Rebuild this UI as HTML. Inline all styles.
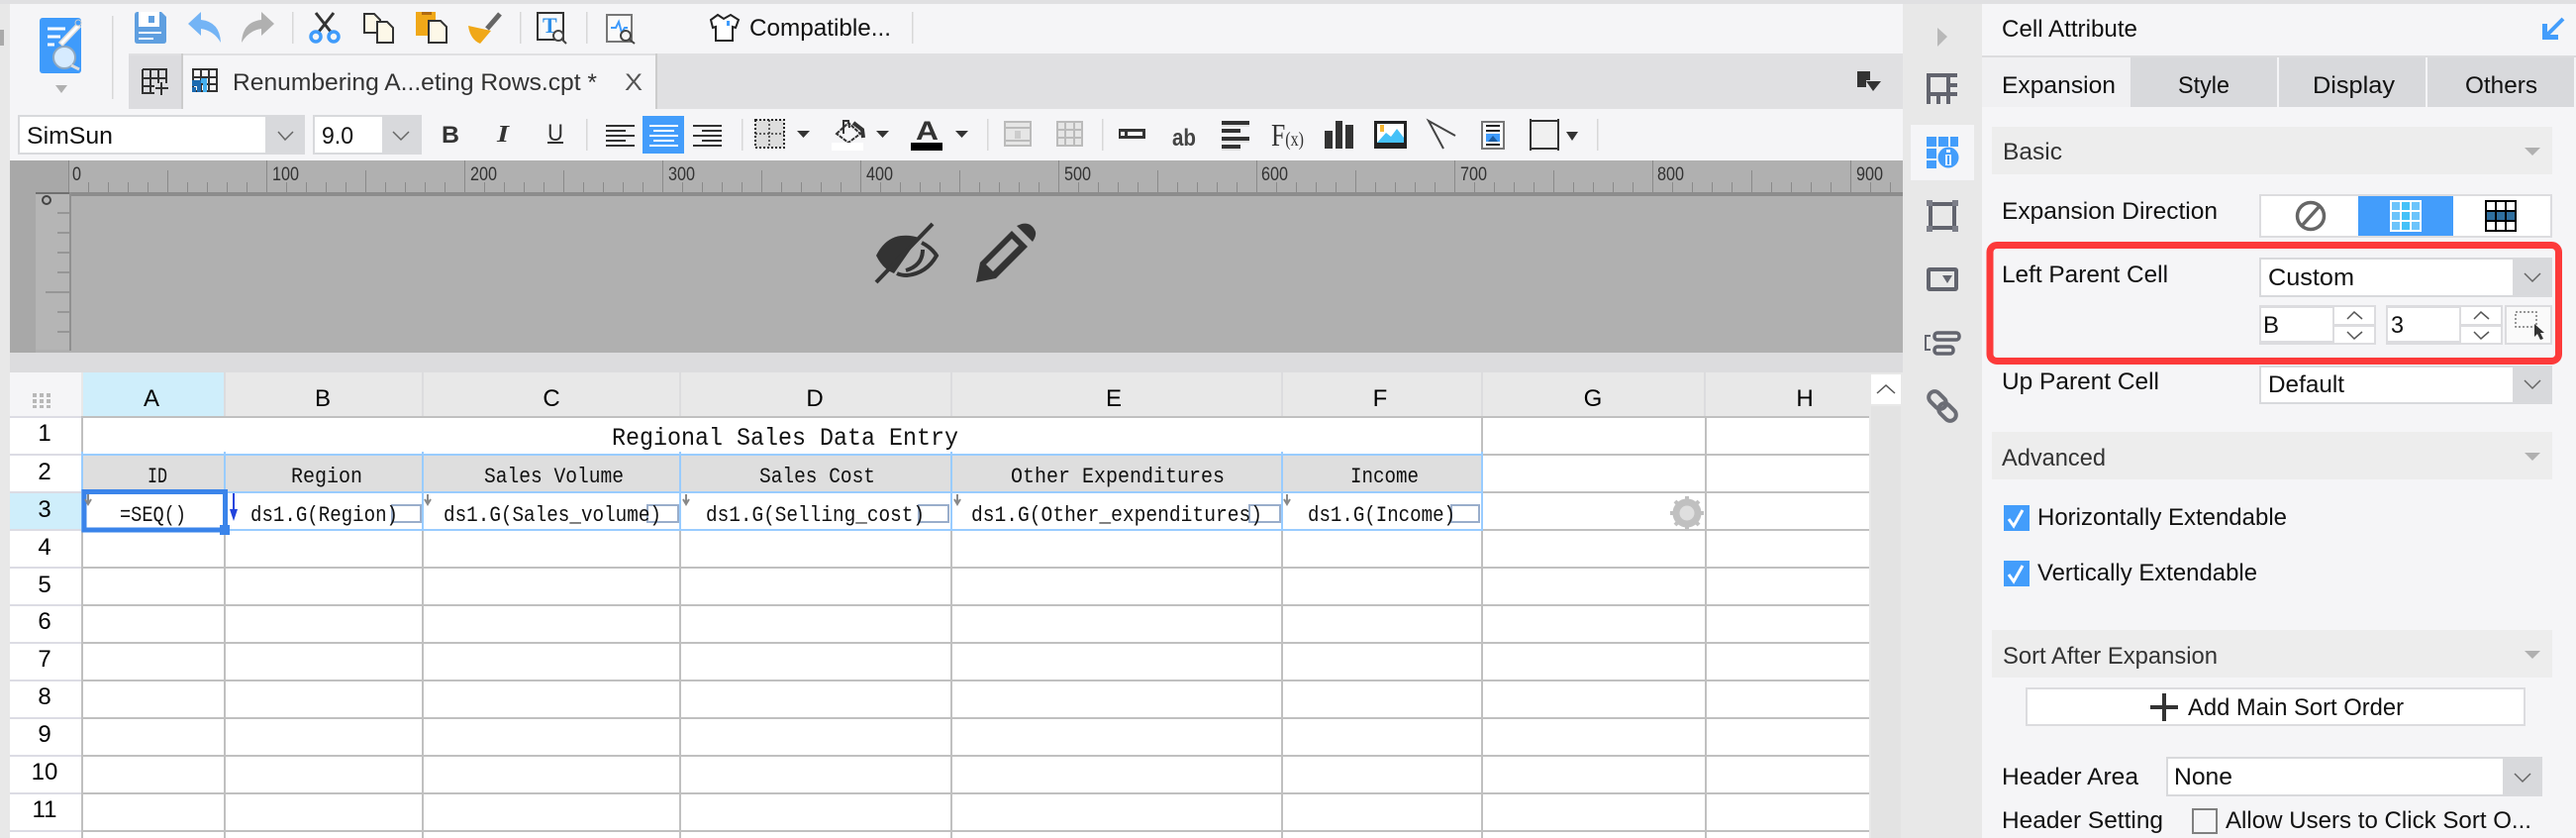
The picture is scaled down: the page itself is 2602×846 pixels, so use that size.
<!DOCTYPE html>
<html lang="en"><head><meta charset="utf-8"><title>Cell Attribute</title>
<style>
html,body{margin:0;padding:0;width:2602px;height:846px;overflow:hidden;background:#f5f5f7}
svg{display:block}
text{font-family:"Liberation Sans",sans-serif;font-size:24px;fill:#111}
.m{font-family:"Liberation Mono",monospace;font-size:22px;fill:#111}
.t{font-family:"Liberation Mono",monospace;font-size:25px;fill:#111}
.h{font-size:24px;fill:#000;text-anchor:middle}
.r{font-size:19px;fill:#333}
</style></head><body>
<svg width="2602" height="846" viewBox="0 0 2602 846" xmlns="http://www.w3.org/2000/svg">
<defs>
<pattern id="rt" patternUnits="userSpaceOnUse" x="69" y="162" width="200" height="34">
<path d="M.5 0V32M100.5 10V32M20.5 22V32M40.5 22V32M60.5 22V32M80.5 22V32M120.5 22V32M140.5 22V32M160.5 22V32M180.5 22V32" stroke="#8a8a8a" fill="none"/>
</pattern>
</defs>
<rect width="2602" height="846" fill="#f5f5f7"/>
<rect width="2602" height="4" fill="#e0e0e2"/>
<rect y="4" width="10" height="842" fill="#e8e8e8"/>
<rect y="30" width="4" height="16" fill="#aaa"/>

<!-- designer icon -->
<rect x="40" y="18" width="42" height="56" rx="3" fill="#3f9bfb"/>
<path d="M48 29H66M48 37H61M48 45H55" stroke="#fff" stroke-width="3"/>
<path d="M80 25L61 45" stroke="#ddd" stroke-width="6"/><path d="M79 26L62 44" stroke="#fff" stroke-width="3"/>
<circle cx="65" cy="58" r="11" fill="#d6ebff" stroke="#8fa8c0" stroke-width="2"/>
<path d="M72 66L80 70" stroke="#ddd" stroke-width="3"/>
<circle cx="79" cy="23" r="3" fill="#3f9bfb" stroke="#ccc"/>
<path d="M56 86H68L62 94Z" fill="#b0b0b0"/>
<rect x="113" y="16" width="1.500" height="84" fill="#d8d8d8"/>

<!-- top toolbar -->
<path d="M139 12H163L168 17V41Q168 44 165 44H139Q136 44 136 41V15Q136 12 139 12Z" fill="#5f9fe0"/>
<rect x="140" y="12" width="21" height="15" fill="#fff"/><rect x="150" y="16" width="6" height="7" fill="#5f9fe0"/>
<path d="M140 33H163M140 39H155" stroke="#fff" stroke-width="2"/>
<path d="M190 24L203 12V20Q222 22 223 43Q216 31 203 29V36Z" fill="#74b4f5"/>
<path d="M277 24L264 12V20Q245 22 244 43Q251 31 264 29V36Z" fill="#b0b0b0"/>
<rect x="295" y="12" width="1.500" height="32" fill="#d8d8d8"/>
<path d="M319 13L334 32M337 13L322 32" stroke="#333" stroke-width="3"/>
<circle cx="319" cy="37" r="5" fill="none" stroke="#3f9bfb" stroke-width="3.500"/><circle cx="337" cy="37" r="5" fill="none" stroke="#3f9bfb" stroke-width="3.500"/>
<path d="M368 14H378L384 20V33H368Z" fill="#fdf8e8" stroke="#333" stroke-width="2"/>
<path d="M381 22H391L397 28V43H381Z" fill="#fdf8e8" stroke="#333" stroke-width="2"/>
<rect x="420" y="12" width="20" height="24" fill="#f0a818"/><rect x="426" y="12" width="10" height="3" fill="#b06a10"/>
<path d="M433 21H445L451 27V43H433Z" fill="#fdf8e8" stroke="#333" stroke-width="2"/>
<path d="M473 26L496 31L485 44Q475 40 473 26Z" fill="#f0a818"/>
<path d="M505 14L492 29" stroke="#666" stroke-width="5"/>
<rect x="525" y="12" width="1.500" height="32" fill="#d8d8d8"/>
<rect x="543" y="13" width="26" height="27" fill="#fafafa" stroke="#333" stroke-width="2"/>
<text x="548" y="33" style="font-size:22px;fill:#2e8fe8;font-weight:bold;font-family:'Liberation Serif',serif">T</text>
<circle cx="564" cy="36" r="5" fill="#f5f5f7" stroke="#444" stroke-width="2"/><path d="M568 40L572 44" stroke="#444" stroke-width="2"/>
<rect x="592" y="12" width="1.500" height="32" fill="#d8d8d8"/>
<rect x="613" y="15" width="25" height="27" fill="#fafafa" stroke="#777" stroke-width="2"/>
<path d="M617 28H622L625 22L628 33L631 28H634" fill="none" stroke="#3f9bfb" stroke-width="2"/>
<circle cx="632" cy="36" r="5" fill="#f5f5f7" stroke="#444" stroke-width="2"/><path d="M636 40L641 44" stroke="#444" stroke-width="2"/>
<path d="M725 15L731 19L738 15L746 20L743 28L740 27V41H723V27L720 28L718 20Z" fill="#fff" stroke="#222" stroke-width="2"/>
<rect x="734" y="21" width="3" height="5" fill="#3f9bfb"/>
<text x="757" y="36" textLength="143" lengthAdjust="spacingAndGlyphs">Compatible...</text>
<rect x="921" y="12" width="1.500" height="32" fill="#d8d8d8"/>

<!-- tab row -->
<rect x="130" y="54" width="1792" height="56" fill="#e0e0e2"/>
<rect x="130" y="56" width="53" height="54" fill="#dcdcdf"/>
<rect x="183" y="54" width="2" height="56" fill="#ccc"/>
<rect x="185" y="56" width="477" height="54" fill="#f5f5f7"/>
<rect x="662" y="54" width="2" height="56" fill="#ccc"/>
<path d="M144 70H168V84M144 70V94H156M144 79H168M144 87H156M152 70V94M160 70V84" fill="none" stroke="#333" stroke-width="2"/>
<path d="M163 83V96M157 89H170" stroke="#333" stroke-width="2"/>
<path d="M195 70H219V92H195ZM195 78H219M195 85H219M203 70V92M211 70V92" fill="none" stroke="#333" stroke-width="2"/>
<path d="M194 81H203V93H199V87H194ZM194 88H198V93H194Z" fill="#1c6ab0"/><path d="M203 79H209V93H205V84H203Z" fill="#45b0f0"/>
<text x="235" y="91" textLength="368" lengthAdjust="spacingAndGlyphs" style="fill:#333">Renumbering A...eting Rows.cpt *</text>
<text x="631" y="91" textLength="18" lengthAdjust="spacingAndGlyphs" style="fill:#555">X</text>
<path d="M1876 72H1889V81H1885V88H1876ZM1885 82H1900L1892 92Z" fill="#333"/>

<!-- format row -->
<rect x="18" y="116" width="290" height="40" fill="#d8d9dc"/><rect x="20" y="118" width="248" height="36" fill="#fff"/>
<path d="M281 133L288 141L296 133" fill="none" stroke="#666" stroke-width="1.5"/>
<text x="27" y="145" textLength="87" lengthAdjust="spacingAndGlyphs">SimSun</text>
<rect x="316" y="116" width="110" height="40" fill="#d8d9dc"/><rect x="318" y="118" width="68" height="36" fill="#fff"/>
<path d="M397 133L405 141L413 133" fill="none" stroke="#666" stroke-width="1.5"/>
<text x="325" y="145" textLength="32" lengthAdjust="spacingAndGlyphs">9.0</text>
<text x="446" y="144" textLength="18" lengthAdjust="spacingAndGlyphs" style="font-weight:bold;fill:#333">B</text>
<text x="502" y="143" textLength="12" lengthAdjust="spacingAndGlyphs" style="font-style:italic;font-family:'Liberation Serif',serif;fill:#333;font-weight:bold">I</text>
<text x="553" y="142" textLength="16" lengthAdjust="spacingAndGlyphs" style="fill:#333">U</text><rect x="553" y="143" width="16" height="2" fill="#333"/>
<rect x="592" y="120" width="1.500" height="32" fill="#d8d8d8"/>
<path d="M612 127H641M612 132H632M612 137H641M612 142H632M612 147H641" stroke="#333" stroke-width="2"/>
<rect x="649" y="117" width="42" height="38" fill="#439dfb"/>
<path d="M656 127H685M660 132H681M656 137H685M660 142H681M656 147H685" stroke="#fff" stroke-width="2"/>
<path d="M700 127H729M709 132H729M700 137H729M709 142H729M700 147H729" stroke="#333" stroke-width="2"/>
<rect x="749" y="120" width="1.500" height="32" fill="#d8d8d8"/>
<rect x="763" y="121" width="29" height="28" fill="#ddd" stroke="#222" stroke-width="2" stroke-dasharray="2 2"/>
<path d="M763 135H792M777 121V149" stroke="#333" stroke-width="1.500" stroke-dasharray="2 2"/>
<path d="M805 132H818L811.5 139Z" fill="#333"/>
<path d="M845 135L857 124L869 135L857 144Z" fill="#f5f5f7" stroke="#333" stroke-width="2" stroke-dasharray="4 1"/>
<path d="M852 135V122H857L858 129" fill="none" stroke="#333" stroke-width="2"/>
<path d="M862 124L871 131L872 139" fill="none" stroke="#333" stroke-width="4"/>
<rect x="840" y="144" width="32" height="8" fill="#fff"/>
<path d="M885 132H898L891.5 139Z" fill="#333"/>
<text x="925" y="141" textLength="23" lengthAdjust="spacingAndGlyphs" style="font-weight:bold;fill:#333;font-size:27px">A</text>
<rect x="920" y="144" width="32" height="8" fill="#000"/>
<path d="M965 132H978L971.5 139Z" fill="#333"/>
<rect x="997" y="120" width="1.500" height="32" fill="#d8d8d8"/>
<rect x="1015" y="123" width="26" height="24" fill="#e6e6e6" stroke="#bbb" stroke-width="2"/><path d="M1015 129H1041M1015 142H1041" stroke="#bbb" stroke-width="2"/><rect x="1025" y="132" width="6" height="8" fill="#ccc"/>
<rect x="1068" y="123" width="25" height="24" fill="#e6e6e6" stroke="#bbb" stroke-width="2"/><path d="M1068 131H1093M1068 139H1093M1076 123V147M1085 123V147" stroke="#bbb" stroke-width="2"/>
<rect x="1113" y="120" width="1.500" height="32" fill="#d8d8d8"/>
<rect x="1130" y="130" width="27" height="10" fill="#333"/><rect x="1132" y="133" width="4" height="4" fill="#fff"/><rect x="1139" y="133" width="15" height="4" fill="#fff"/>
<text x="1184" y="147" textLength="24" lengthAdjust="spacingAndGlyphs" style="fill:#444;font-weight:bold">ab</text>
<path d="M1234 124H1262M1234 132H1253M1234 140H1262M1234 148H1253" stroke="#333" stroke-width="4"/><path d="M1234 127H1262M1234 143H1262M1234 151H1253" stroke="#e0e0e0" stroke-width="2"/>
<text x="1284" y="147" textLength="33" lengthAdjust="spacingAndGlyphs" style="font-family:'Liberation Serif',serif;fill:#333;font-size:32px">F<tspan style="font-size:20px">(x)</tspan></text>
<path d="M1338 132H1346V150H1338ZM1349 122H1356V150H1349ZM1359 126H1367V150H1359Z" fill="#333"/>
<rect x="1388" y="122" width="33" height="28" fill="#222"/><rect x="1391" y="125" width="27" height="19" fill="#fff"/>
<path d="M1391 144L1400 134L1405 138L1411 130L1418 139V144Z" fill="#45c1f8"/><rect x="1394" y="126" width="4" height="7" fill="#f7b733"/>
<path d="M1470 137L1443 122L1458 150" fill="none" stroke="#444" stroke-width="2"/>
<rect x="1497" y="123" width="22" height="27" fill="#fafafa" stroke="#777" stroke-width="2"/>
<path d="M1501 127H1515M1501 132H1515M1501 146H1515" stroke="#222" stroke-width="2"/><rect x="1501" y="135" width="14" height="8" fill="#3f9bfb"/><path d="M1503 143L1508 137L1513 143Z" fill="#1c5ca0"/>
<rect x="1546" y="122" width="28" height="28" fill="#f0f0f0" stroke="#333" stroke-width="2"/>
<path d="M1546 120V152M1574 120V152" stroke="#333" stroke-width="2"/>
<path d="M1582 133H1594L1588 142Z" fill="#333"/>
<rect x="1613" y="120" width="1.500" height="32" fill="#d8d8d8"/>

<!-- ruler area -->
<rect x="10" y="162" width="1912" height="194" fill="#b0b0b0"/>
<rect x="10" y="196" width="26" height="160" fill="#a8a8a8"/><rect x="10" y="162" width="60" height="34" fill="#a8a8a8"/>
<rect x="36" y="196" width="34" height="157" fill="#b5b5b5"/>
<rect x="69" y="162" width="1853" height="33" fill="url(#rt)"/>
<rect x="70" y="194" width="1852" height="4" fill="#8c8c8c"/>
<rect x="36" y="194" width="34" height="2" fill="#707070"/>
<rect x="70" y="194" width="2" height="160" fill="#909090"/>
<path d="M58 215H70M58 235H70M58 255H70M58 275H70M46 295H70M58 315H70M58 335H70" stroke="#969696" stroke-width="2"/>
<circle cx="47" cy="202" r="4" fill="none" stroke="#444" stroke-width="2"/>
<text x="73" y="182" textLength="9" lengthAdjust="spacingAndGlyphs" class="r">0</text>
<text x="275" y="182" textLength="27" lengthAdjust="spacingAndGlyphs" class="r">100</text>
<text x="475" y="182" textLength="27" lengthAdjust="spacingAndGlyphs" class="r">200</text>
<text x="675" y="182" textLength="27" lengthAdjust="spacingAndGlyphs" class="r">300</text>
<text x="875" y="182" textLength="27" lengthAdjust="spacingAndGlyphs" class="r">400</text>
<text x="1075" y="182" textLength="27" lengthAdjust="spacingAndGlyphs" class="r">500</text>
<text x="1274" y="182" textLength="27" lengthAdjust="spacingAndGlyphs" class="r">600</text>
<text x="1475" y="182" textLength="27" lengthAdjust="spacingAndGlyphs" class="r">700</text>
<text x="1674" y="182" textLength="27" lengthAdjust="spacingAndGlyphs" class="r">800</text>
<text x="1875" y="182" textLength="27" lengthAdjust="spacingAndGlyphs" class="r">900</text>
<!-- eye + pencil -->
<path d="M910 238Q894 240 885 258Q892 272 903 276L928 240Q920 237 910 238Z" fill="#333"/>
<path d="M931 245Q941 250 946 258Q936 276 916 278Q910 278 906 276" fill="none" stroke="#333" stroke-width="4"/>
<path d="M915 273Q932 268 932 252" fill="none" stroke="#333" stroke-width="4"/>
<path d="M885 285L942 226" stroke="#333" stroke-width="4"/>
<path d="M986 285L990 265L1022 233L1038 249L1006 281Z" fill="#333"/>
<path d="M996 267L1022 241L1029 248L1003 274Z" fill="#b0b0b0"/>
<path d="M1027 228L1032 226Q1042 224 1046 234Q1047 238 1043 244Z" fill="#333"/>

<!-- sheet -->
<rect x="10" y="356" width="1912" height="20" fill="#dcdcde"/>
<rect x="10" y="376" width="1878" height="44" fill="#e8e8e8"/>
<rect x="10" y="376" width="72" height="44" fill="#f5f5f7"/>
<rect x="84" y="376" width="142" height="44" fill="#cfeefb"/>
<path d="M227 376V420M427 376V420M687 376V420M961 376V420M1295 376V420M1497 376V420M1722 376V420" stroke="#dcdcde" stroke-width="2"/>
<path d="M33 397h4v4h-4zM40 397h4v4h-4zM47 397h4v4h-4zM33 403h4v4h-4zM40 403h4v4h-4zM47 403h4v4h-4zM33 409h4v3h-4zM40 409h4v3h-4zM47 409h4v3h-4z" fill="#b8b8b8"/>
<rect x="10" y="420" width="1878" height="426" fill="#fff"/>
<rect x="10" y="496" width="72" height="38" fill="#cfeefb"/>
<rect x="84" y="460" width="1412" height="36" fill="#dedede"/>
<!-- row lines -->
<path d="M10 421H82M10 459H82M10 497H82M10 535H82M10 573H82M10 611H82M10 649H82M10 687H82M10 725H82M10 763H82M10 801H82M10 839H82" stroke="#dcdce4" stroke-width="2"/>
<path d="M82 421H1888M82 459H1888M82 497H1888M82 535H1888M82 573H1888M82 611H1888M82 649H1888M82 687H1888M82 725H1888M82 763H1888M82 801H1888M82 839H1888" stroke="#c0c0c0" stroke-width="2"/>
<path d="M83 420V846M1497 420V846M1723 420V846" stroke="#c0c0c0" stroke-width="2"/>
<path d="M227 458V846M427 458V846M687 458V846M961 458V846M1295 458V846" stroke="#c0c0c0" stroke-width="2"/>
<!-- blue -->
<path d="M82 459H1498M82 497H1498M82 535H1498" stroke="#99ccff" stroke-width="2"/>
<path d="M83 456V536M227 456V536M427 456V536M687 456V536M961 456V536M1295 456V536M1497 456V536" stroke="#99ccff" stroke-width="2"/>
<!-- inner rects -->
<path d="M396 510H425V527H396ZM654 510H685V527H654ZM928 510H958V527H928ZM1262 510H1293V527H1262ZM1466 510H1494V527H1466Z" fill="none" stroke="#9aaecb" stroke-width="2"/>
<!-- selection -->
<rect x="85" y="496.500" width="142.500" height="38.500" fill="#fff" stroke="#3a84ea" stroke-width="5"/>
<rect x="222" y="530" width="10" height="10" fill="#3a84ea"/>
<!-- arrows -->
<path d="M89 499V507M86 504L89 509L92 504" fill="none" stroke="#888" stroke-width="2"/>
<path d="M236 498V522" stroke="#2244dd" stroke-width="2"/><path d="M232 514H240L236 526Z" fill="#2244dd"/>
<path d="M432 499V507M429 504L432 509L435 504M693 499V507M690 504L693 509L696 504M967 499V507M964 504L967 509L970 504M1300 499V507M1297 504L1300 509L1303 504" fill="none" stroke="#888" stroke-width="2"/>
<!-- gear -->
<circle cx="1704" cy="518" r="11" fill="#dfdfdf" stroke="#c0c0c0" stroke-width="7"/>
<path d="M1704 501V535M1687 518H1721M1692 506L1716 530M1716 506L1692 530" stroke="#c0c0c0" stroke-width="4" stroke-dasharray="5 24"/>
<!-- header letters -->
<text x="153" y="410" class="h">A</text><text x="326" y="410" class="h">B</text><text x="557" y="410" class="h">C</text><text x="823" y="410" class="h">D</text><text x="1125" y="410" class="h">E</text><text x="1394" y="410" class="h">F</text><text x="1609" y="410" class="h">G</text><text x="1823" y="410" class="h">H</text>
<text x="45" y="445" class="h">1</text><text x="45" y="484" class="h">2</text><text x="45" y="522" class="h">3</text><text x="45" y="560" class="h">4</text><text x="45" y="598" class="h">5</text><text x="45" y="635" class="h">6</text><text x="45" y="673" class="h">7</text><text x="45" y="711" class="h">8</text><text x="45" y="749" class="h">9</text><text x="45" y="787" class="h">10</text><text x="45" y="825" class="h">11</text>
<!-- cell text -->
<text x="618" y="449" class="t" textLength="350" lengthAdjust="spacingAndGlyphs">Regional Sales Data Entry</text>
<text x="149" y="487" class="m" textLength="20" lengthAdjust="spacingAndGlyphs">ID</text>
<text x="294" y="487" class="m" textLength="72" lengthAdjust="spacingAndGlyphs">Region</text>
<text x="489" y="487" class="m" textLength="141" lengthAdjust="spacingAndGlyphs">Sales Volume</text>
<text x="767" y="487" class="m" textLength="117" lengthAdjust="spacingAndGlyphs">Sales Cost</text>
<text x="1021" y="487" class="m" textLength="216" lengthAdjust="spacingAndGlyphs">Other Expenditures</text>
<text x="1364" y="487" class="m" textLength="69" lengthAdjust="spacingAndGlyphs">Income</text>
<text x="121" y="526" class="m" textLength="67" lengthAdjust="spacingAndGlyphs">=SEQ()</text>
<text x="253" y="526" class="m" textLength="149" lengthAdjust="spacingAndGlyphs">ds1.G(Region)</text>
<text x="448" y="526" class="m" textLength="220" lengthAdjust="spacingAndGlyphs">ds1.G(Sales_volume)</text>
<text x="713" y="526" class="m" textLength="221" lengthAdjust="spacingAndGlyphs">ds1.G(Selling_cost)</text>
<text x="981" y="526" class="m" textLength="294" lengthAdjust="spacingAndGlyphs">ds1.G(Other_expenditures)</text>
<text x="1321" y="526" class="m" textLength="149" lengthAdjust="spacingAndGlyphs">ds1.G(Income)</text>
<!-- scrollbar -->
<rect x="1888" y="376" width="34" height="470" fill="#e8e8e8"/>
<rect x="1890" y="378" width="30" height="30" fill="#fff"/>
<rect x="1890" y="410" width="30" height="436" fill="#e3e3e3"/>
<path d="M1896 397L1905 389L1914 397" fill="none" stroke="#555" stroke-width="1.500"/>

<!-- sidebar -->
<rect x="1922" y="4" width="80" height="842" fill="#e8e8e8"/>
<path d="M1957 28L1967 37L1957 47Z" fill="#b8b8b8"/>
<rect x="1930" y="126" width="64" height="56" fill="#f5f5f7"/>
<path d="M1948 105V76H1968V105M1968 76H1977M1968 86H1977M1946 95H1977M1958 95V105" fill="none" stroke="#62646e" stroke-width="4"/>
<path d="M1946 138h10v10h-10zM1958 138h10v10h-10zM1970 138h8v10h-8zM1946 150h10v10h-10zM1946 162h10v8h-10z" fill="#439dfb"/>
<circle cx="1968" cy="159" r="10.500" fill="#439dfb"/>
<path d="M1966 151h4v3h-4zM1965 156h6v11h-6z" fill="#eaf4ff"/><rect x="1967" y="157" width="2" height="9" fill="#439dfb"/>
<rect x="1950" y="206" width="24" height="24" fill="none" stroke="#62646e" stroke-width="4"/>
<path d="M1946 202h6v6h-6zM1972 202h6v6h-6zM1946 228h6v6h-6zM1972 228h6v6h-6z" fill="#7c7e88"/>
<rect x="1948" y="272" width="28" height="20" rx="1" fill="none" stroke="#62646e" stroke-width="4"/><path d="M1962 278H1972L1967 286Z" fill="#62646e"/>
<path d="M1950 339H1945V353H1950" fill="none" stroke="#62646e" stroke-width="2"/>
<rect x="1954" y="336" width="25" height="7" rx="3" fill="none" stroke="#62646e" stroke-width="3.500"/><rect x="1954" y="350" width="19" height="7" rx="3" fill="none" stroke="#62646e" stroke-width="3.500"/>
<rect x="1947" y="398" width="20" height="12" rx="6" fill="none" stroke="#6b6d75" stroke-width="4" transform="rotate(45 1957 404)"/>
<rect x="1957" y="410" width="20" height="12" rx="6" fill="none" stroke="#6b6d75" stroke-width="4" transform="rotate(45 1967 416)"/>

<!-- panel -->
<rect x="2002" y="4" width="600" height="842" fill="#f5f5f7"/>
<text x="2022" y="37" textLength="137" lengthAdjust="spacingAndGlyphs">Cell Attribute</text>
<path d="M2589 19L2572 36" stroke="#439dfb" stroke-width="4"/><path d="M2568 24V40H2584V35H2573V24Z" fill="#439dfb"/>
<rect x="2002" y="56" width="600" height="2" fill="#dcdcde"/>
<rect x="2002" y="58" width="150" height="50" fill="#f0f0f2"/>
<rect x="2152" y="58" width="148" height="50" fill="#d8d9dc"/>
<rect x="2302" y="58" width="148" height="50" fill="#d8d9dc"/>
<rect x="2452" y="58" width="148" height="50" fill="#d8d9dc"/>
<text x="2022" y="94" textLength="115" lengthAdjust="spacingAndGlyphs">Expansion</text>
<text x="2200" y="94" textLength="52" lengthAdjust="spacingAndGlyphs">Style</text>
<text x="2336" y="94" textLength="83" lengthAdjust="spacingAndGlyphs">Display</text>
<text x="2490" y="94" textLength="73" lengthAdjust="spacingAndGlyphs">Others</text>
<rect x="2012" y="128" width="566" height="48" fill="#ededed"/>
<text x="2023" y="161" textLength="60" lengthAdjust="spacingAndGlyphs" style="fill:#333">Basic</text>
<path d="M2550 149H2566L2558 157Z" fill="#b0b0b0"/>
<text x="2022" y="221" textLength="218" lengthAdjust="spacingAndGlyphs">Expansion Direction</text>
<rect x="2283" y="197" width="294" height="42" fill="#fff" stroke="#dcdcdf" stroke-width="2"/>
<rect x="2382" y="198" width="96" height="40" fill="#439dfb"/>
<circle cx="2334" cy="218" r="13.500" fill="none" stroke="#666" stroke-width="3.500"/><path d="M2325 228L2343 208" stroke="#666" stroke-width="3.500"/>
<rect x="2415" y="203" width="30" height="30" fill="#6cc4fb"/>
<rect x="2425" y="203" width="10" height="30" fill="#45c1f8"/>
<path d="M2415 203H2445V233H2415ZM2415 213H2445M2415 223H2445M2425 203V233M2435 203V233" fill="none" stroke="#fff" stroke-width="2"/>
<rect x="2511" y="213" width="30" height="10" fill="#2f6f9f"/>
<path d="M2511 203H2541V233H2511ZM2511 213H2541M2511 223H2541M2521 203V233M2531 203V233" fill="none" stroke="#000" stroke-width="2"/>
<!-- highlight -->
<rect x="2010" y="247.500" width="574.500" height="117" rx="7" fill="none" stroke="#fc3a3a" stroke-width="7"/>
<text x="2022" y="285" textLength="168" lengthAdjust="spacingAndGlyphs">Left Parent Cell</text>
<rect x="2282" y="260" width="296" height="40" fill="#d8d9dc"/><rect x="2284" y="262" width="254" height="36" fill="#fff"/>
<text x="2291" y="288" textLength="87" lengthAdjust="spacingAndGlyphs">Custom</text>
<path d="M2550 276L2558 284L2566 276" fill="none" stroke="#666" stroke-width="1.500"/>
<rect x="2282" y="308" width="118" height="40" fill="#dcdcdf"/><rect x="2284" y="311" width="72" height="33" fill="#fff"/><rect x="2358" y="310" width="40" height="17" fill="#fff"/><rect x="2358" y="330" width="40" height="16" fill="#fff"/>
<text x="2286" y="336" textLength="16" lengthAdjust="spacingAndGlyphs">B</text>
<path d="M2371 322L2378 315L2386 322M2371 335L2378 342L2386 335" fill="none" stroke="#555" stroke-width="1.500"/>
<rect x="2410" y="308" width="118" height="40" fill="#dcdcdf"/><rect x="2412" y="311" width="72" height="33" fill="#fff"/><rect x="2486" y="310" width="40" height="17" fill="#fff"/><rect x="2486" y="330" width="40" height="16" fill="#fff"/>
<text x="2415" y="336" textLength="13" lengthAdjust="spacingAndGlyphs">3</text>
<path d="M2499 322L2506 315L2514 322M2499 335L2506 342L2514 335" fill="none" stroke="#555" stroke-width="1.500"/>
<rect x="2531" y="309" width="46" height="38" fill="#fafafa" stroke="#dcdcdf" stroke-width="2"/>
<rect x="2541" y="315" width="21" height="15" fill="none" stroke="#777" stroke-width="1.500" stroke-dasharray="2 2"/>
<path d="M2560 327V340L2563 337L2566 343L2569 342L2566 336L2570 336Z" fill="#333"/>
<text x="2022" y="393" textLength="159" lengthAdjust="spacingAndGlyphs">Up Parent Cell</text>
<rect x="2282" y="369" width="296" height="39" fill="#d8d9dc"/><rect x="2284" y="371" width="254" height="35" fill="#fff"/>
<text x="2291" y="396" textLength="77" lengthAdjust="spacingAndGlyphs">Default</text>
<path d="M2550 384L2558 392L2566 384" fill="none" stroke="#666" stroke-width="1.500"/>
<rect x="2012" y="436" width="566" height="48" fill="#ededed"/>
<text x="2022" y="470" textLength="105" lengthAdjust="spacingAndGlyphs" style="fill:#333">Advanced</text>
<path d="M2550 457H2566L2558 465Z" fill="#b0b0b0"/>
<rect x="2024" y="510" width="26" height="26" fill="#439dfb"/><path d="M2029 524L2034 531L2043 515" fill="none" stroke="#fff" stroke-width="3"/>
<text x="2058" y="530" textLength="252" lengthAdjust="spacingAndGlyphs">Horizontally Extendable</text>
<rect x="2024" y="566" width="26" height="26" fill="#439dfb"/><path d="M2029 580L2034 587L2043 571" fill="none" stroke="#fff" stroke-width="3"/>
<text x="2058" y="586" textLength="222" lengthAdjust="spacingAndGlyphs">Vertically Extendable</text>
<rect x="2012" y="636" width="566" height="48" fill="#ededed"/>
<text x="2023" y="670" textLength="217" lengthAdjust="spacingAndGlyphs" style="fill:#333">Sort After Expansion</text>
<path d="M2550 657H2566L2558 665Z" fill="#b0b0b0"/>
<rect x="2047" y="695" width="503" height="37" fill="#fff" stroke="#dcdcdf" stroke-width="2"/>
<path d="M2172 714H2200M2186 700V728" stroke="#333" stroke-width="4"/>
<text x="2210" y="722" textLength="218" lengthAdjust="spacingAndGlyphs">Add Main Sort Order</text>
<text x="2022" y="792" textLength="138" lengthAdjust="spacingAndGlyphs">Header Area</text>
<rect x="2188" y="764" width="380" height="40" fill="#d8d9dc"/><rect x="2190" y="766" width="338" height="36" fill="#fff"/>
<text x="2196" y="792" textLength="59" lengthAdjust="spacingAndGlyphs">None</text>
<path d="M2540 781L2548 789L2556 781" fill="none" stroke="#666" stroke-width="1.500"/>
<text x="2022" y="836" textLength="163" lengthAdjust="spacingAndGlyphs">Header Setting</text>
<rect x="2215" y="817" width="24" height="24" fill="#f5f5f7" stroke="#808080" stroke-width="2"/>
<text x="2248" y="836" textLength="309" lengthAdjust="spacingAndGlyphs">Allow Users to Click Sort O...</text>
</svg>
</body></html>
